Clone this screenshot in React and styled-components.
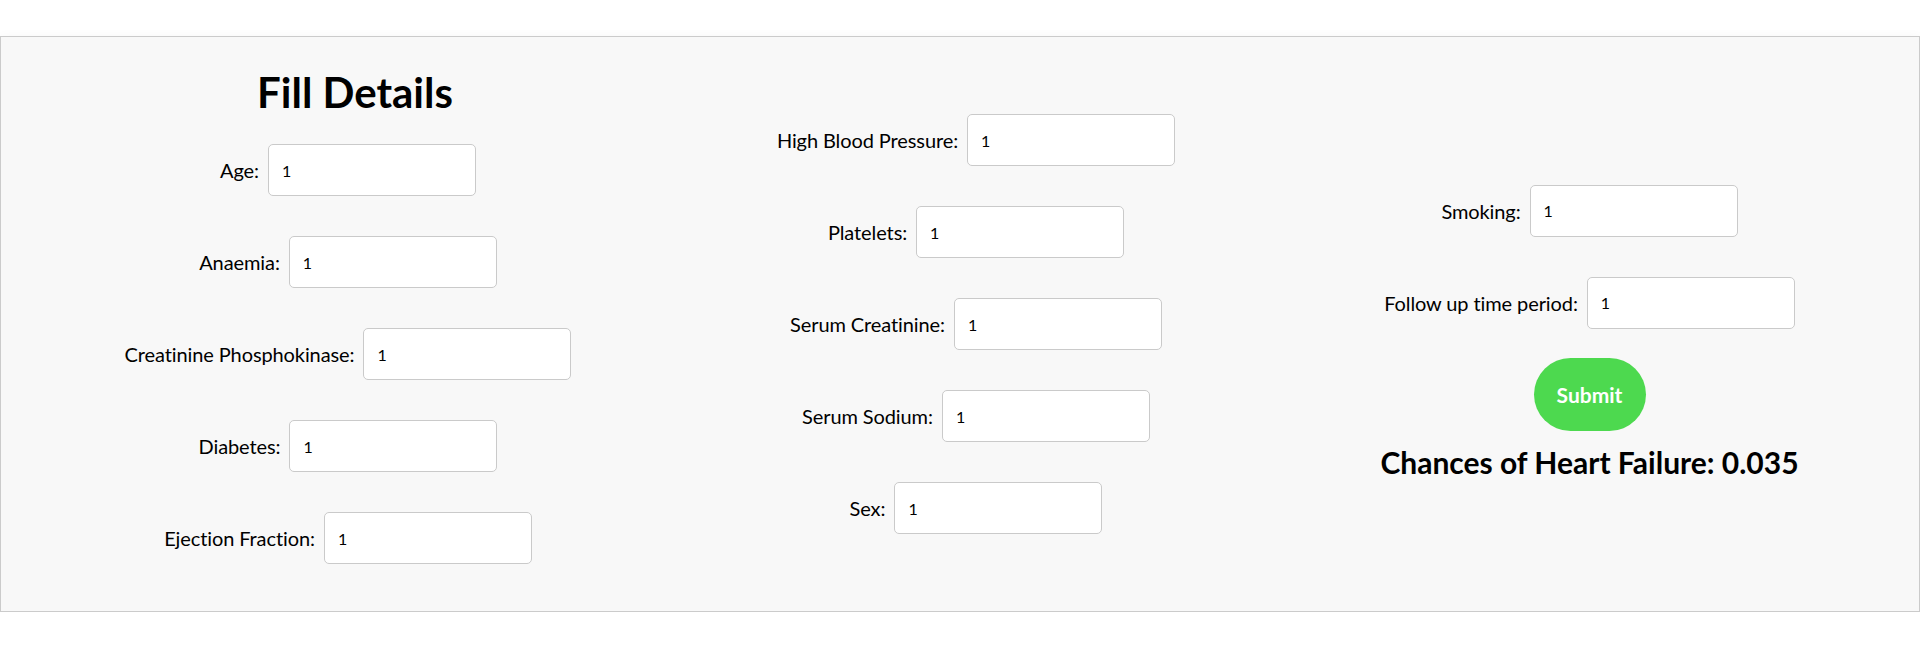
import React from "react";
import styled, { createGlobalStyle } from "styled-components";

const GlobalStyle = createGlobalStyle`
  html, body {
    margin: 0;
    padding: 0;
    background: #ffffff;
    font-family: Lato, "Open Sans", sans-serif;
    color: #000;
  }
`;

const Page = styled.div`
  padding-top: 36px;
`;

const Card = styled.form`
  box-sizing: border-box;
  width: 100%;
  border: 1px solid #cbcbcb;
  background: #f8f8f8;
  box-shadow: 0 6px 14px rgba(0, 0, 0, 0.09);
  padding: 27px 0 27px 121px;
  display: grid;
  grid-template-columns: 452px 398px 423px;
  column-gap: 203px;
  align-items: center;
`;

const Column = styled.div`
  display: flex;
  flex-direction: column;
  align-items: center;
`;

const Heading = styled.h1`
  margin: 0 0 4px 14px;
  font-size: 42px;
  line-height: 56px;
  font-weight: 700;
  letter-spacing: 0;
`;

const Row = styled.div`
  display: flex;
  align-items: center;
  justify-content: center;
  gap: 9px;
  margin: 20px 0;
`;

const Label = styled.label`
  font-size: 20px;
  font-weight: 400;
  white-space: nowrap;
  letter-spacing: -0.1px;
`;

const Input = styled.input`
  box-sizing: border-box;
  width: 208px;
  height: 52px;
  padding: 0 13px;
  border: 1px solid #cacaca;
  border-radius: 5px;
  background: #fff;
  font-family: Lato, sans-serif;
  font-size: 16px;
  color: #000;
  outline: none;
`;

const SubmitButton = styled.button`
  width: 112px;
  height: 73px;
  margin-top: 9px;
  border: none;
  border-radius: 37px;
  background: #4dd94f;
  color: #fff;
  font-family: Lato, sans-serif;
  font-size: 21px;
  font-weight: 700;
  cursor: pointer;
`;

const Result = styled.h2`
  margin: 14px 0 5px;
  font-size: 30px;
  font-weight: 700;
  line-height: 34px;
  white-space: nowrap;
  letter-spacing: 0;
`;

const Field = ({ label }) => (
  <Row>
    <Label>{label}:</Label>
    <Input type="text" defaultValue="1" />
  </Row>
);

const col1 = ["Age", "Anaemia", "Creatinine Phosphokinase", "Diabetes", "Ejection Fraction"];
const col2 = ["High Blood Pressure", "Platelets", "Serum Creatinine", "Serum Sodium", "Sex"];
const col3 = ["Smoking", "Follow up time period"];

export default function App() {
  return (
    <Page>
      <GlobalStyle />
      <Card onSubmit={(e) => e.preventDefault()}>
        <Column>
          <Heading>Fill Details</Heading>
          {col1.map((l) => (
            <Field key={l} label={l} />
          ))}
        </Column>
        <Column>
          {col2.map((l) => (
            <Field key={l} label={l} />
          ))}
        </Column>
        <Column>
          {col3.map((l) => (
            <Field key={l} label={l} />
          ))}
          <SubmitButton type="submit">Submit</SubmitButton>
          <Result>Chances of Heart Failure: 0.035</Result>
        </Column>
      </Card>
    </Page>
  );
}
